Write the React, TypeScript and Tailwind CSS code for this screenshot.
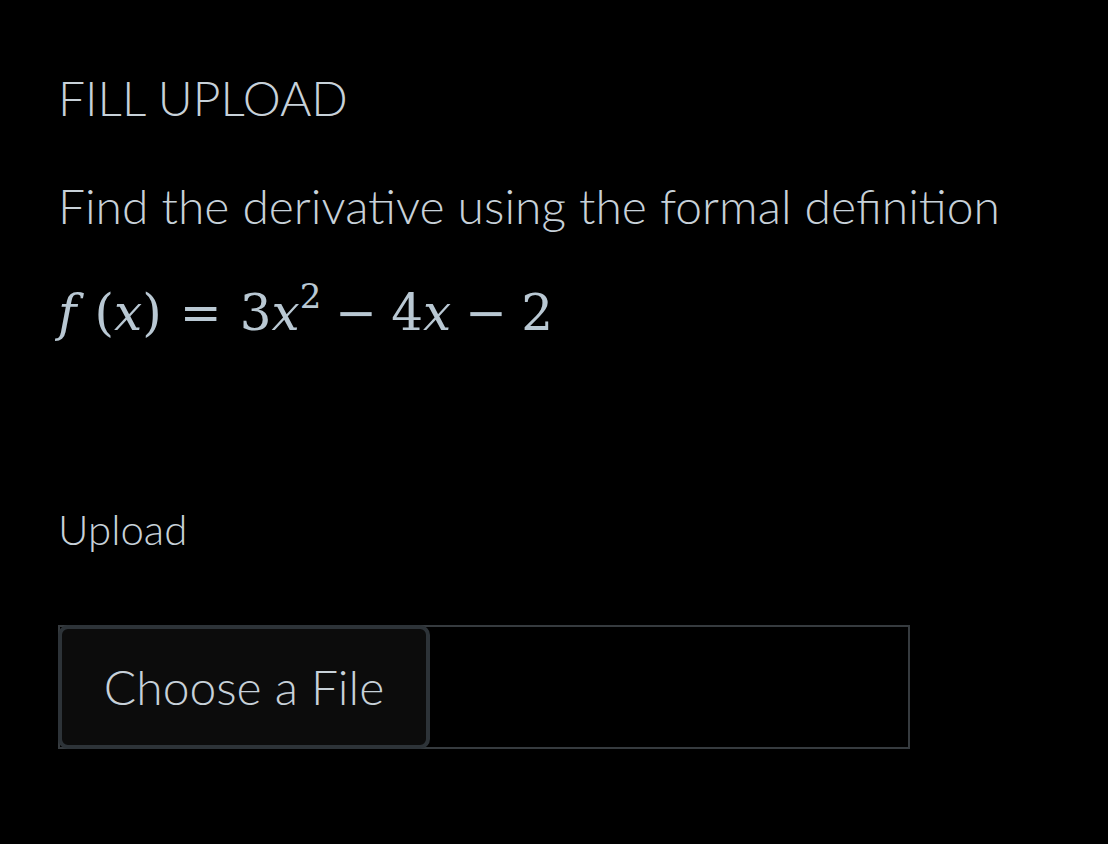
import React from 'react';

const Math: React.FC = () => {
    return (
        <div className="flex items-baseline text-[50px] leading-none text-[#b9c8d3]" style={{ fontFamily: '"DejaVu Serif", "Liberation Serif", serif' }}>
            <span className="italic">f</span>
            <span className="ml-[18px]">(</span>
            <span className="italic">x</span>
            <span>)</span>
            <span className="mx-[18px]">=</span>
            <span>3</span>
            <span className="italic">x</span>
            <span className="relative -top-[22px] text-[34px]">2</span>
            <span className="mx-[14px]">−</span>
            <span>4</span>
            <span className="italic">x</span>
            <span className="mx-[14px]">−</span>
            <span>2</span>
        </div>
    );
};

const App: React.FC = () => {
    return (
        <div className="min-h-screen bg-black text-[#c7d1d9] px-[58px] pt-[68px]" style={{ fontFamily: 'Lato, "Open Sans", sans-serif' }}>
            <h1 className="text-[48px] font-light leading-tight">FILL UPLOAD</h1>

            <p className="mt-[48px] text-[48px] font-light leading-tight">Find the derivative using the formal definition</p>

            <div className="mt-[52px]">
                <Math />
            </div>

            <label className="mt-[165px] block text-[42px] font-light leading-tight">Upload</label>

            <div className="mt-[69px] flex h-[124px] w-[852px] border-2 border-[#363b3f]">
                <button className="-m-[2px] h-[124px] w-[372px] rounded-[10px] border-4 border-[#2d3338] bg-[#0c0c0c] text-[48px] font-light text-[#c7d1d9]">
                    Choose a File
                </button>
            </div>
        </div>
    );
};

export default App;
